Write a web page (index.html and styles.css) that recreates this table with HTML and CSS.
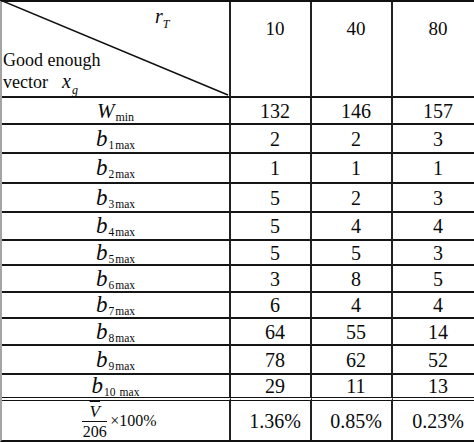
FILE: index.html
```html
<!DOCTYPE html>
<html>
<head>
<meta charset="utf-8">
<link rel="stylesheet" href="styles.css">
</head>
<body>
<div class="tbl">
  <div class="cell corner">
    <svg class="diag" viewBox="0 0 100 100" preserveAspectRatio="none"><line x1="0" y1="0" x2="100" y2="100"/></svg>
    <div class="rt"><i>r</i><span class="sub sub-t"><i>T</i></span></div>
    <div class="ge">Good enough<br>vector<span class="xg"><i>x</i><span class="sub sub-g"><i>g</i></span></span></div>
  </div>
  <div class="cell num head">10</div>
  <div class="cell num head">40</div>
  <div class="cell num head last">80</div>

  <div class="cell lab"><i class="w">W</i><span class="sub sub-m">min</span></div>
  <div class="cell num">132</div><div class="cell num">146</div><div class="cell num last">157</div>

  <div class="cell lab"><i class="b">b</i><span class="sub sub-b">1<span class="mx">max</span></span></div>
  <div class="cell num">2</div><div class="cell num">2</div><div class="cell num last">3</div>

  <div class="cell lab"><i class="b">b</i><span class="sub sub-b">2<span class="mx">max</span></span></div>
  <div class="cell num">1</div><div class="cell num">1</div><div class="cell num last">1</div>

  <div class="cell lab"><i class="b">b</i><span class="sub sub-b">3<span class="mx">max</span></span></div>
  <div class="cell num">5</div><div class="cell num">2</div><div class="cell num last">3</div>

  <div class="cell lab"><i class="b">b</i><span class="sub sub-b">4<span class="mx">max</span></span></div>
  <div class="cell num">5</div><div class="cell num">4</div><div class="cell num last">4</div>

  <div class="cell lab"><i class="b">b</i><span class="sub sub-b">5<span class="mx">max</span></span></div>
  <div class="cell num">5</div><div class="cell num">5</div><div class="cell num last">3</div>

  <div class="cell lab"><i class="b">b</i><span class="sub sub-b">6<span class="mx">max</span></span></div>
  <div class="cell num">3</div><div class="cell num">8</div><div class="cell num last">5</div>

  <div class="cell lab"><i class="b">b</i><span class="sub sub-b">7<span class="mx">max</span></span></div>
  <div class="cell num">6</div><div class="cell num">4</div><div class="cell num last">4</div>

  <div class="cell lab"><i class="b">b</i><span class="sub sub-b">8<span class="mx">max</span></span></div>
  <div class="cell num">64</div><div class="cell num">55</div><div class="cell num last">14</div>

  <div class="cell lab"><i class="b">b</i><span class="sub sub-b">9<span class="mx">max</span></span></div>
  <div class="cell num">78</div><div class="cell num">62</div><div class="cell num last">52</div>

  <div class="cell lab nob"><i class="b">b</i><span class="sub sub-b">10<span class="mx wide">max</span></span></div>
  <div class="cell num nob">29</div><div class="cell num nob">11</div><div class="cell num nob last">13</div>

  <div class="cell lab fin">
    <span class="frac"><span class="numer"><i class="vbar">V</i></span><span class="denom">206</span></span><span class="pct">×100%</span>
  </div>
  <div class="cell num fin">1.36%</div><div class="cell num fin">0.85%</div><div class="cell num fin last">0.23%</div>
</div>
</body>
</html>
```

FILE: styles.css
```css
html, body {
  margin: 0;
  padding: 0;
  background: #fff;
  overflow: hidden;
}
body {
  width: 474px;
  height: 442px;
  font-family: "Liberation Serif", "Times New Roman", serif;
  color: #0a0a0a;
}
.tbl {
  display: grid;
  grid-template-columns: 229px 81px 81px 81px;
  grid-template-rows: 96px 27px 29px 30px 29px 28px 25px 27px 26px 27px 29px 22px 43px;
  border-top: 2px solid #111;
  border-bottom: 2px solid #111;
  border-left: 2px solid #a4a4a4;
  width: 474px;
  box-sizing: border-box;
}
.cell {
  box-sizing: border-box;
  border-right: 2px solid #222;
  border-bottom: 2px solid #151515;
  background: #fff;
  position: relative;
}
.cell.last {
  border-right: none;
}
.cell.nob {
  border-bottom: none;
}
.cell.fin {
  border-bottom: none;
  border-top: 4px double #111;
}
.num {
  display: flex;
  align-items: center;
  justify-content: center;
  padding-left: 9px;
  font-size: 20px;
  line-height: 20px;
}
.num.head {
  align-items: flex-start;
  padding-top: 17px;
  font-size: 19px;
}
.lab {
  display: flex;
  align-items: center;
  justify-content: center;
  line-height: 20px;
}
.diag {
  position: absolute;
  left: -2px;
  top: -2px;
  width: calc(100% + 1px);
  height: calc(100% + 1px);
  overflow: visible;
}
.diag line {
  stroke: #111;
  stroke-width: 1.6px;
  vector-effect: non-scaling-stroke;
}
.rt {
  position: relative;
  padding-top: 4px;
  padding-left: 153px;
  font-size: 20px;
  line-height: 20px;
}
.ge {
  position: relative;
  margin-top: 21px;
  padding-left: 1px;
  font-size: 18px;
  line-height: 21px;
}
.xg {
  margin-left: 14px;
  font-size: 20px;
}
.sub {
  font-style: normal;
  position: relative;
}
.sub-t {
  font-size: 12px;
  top: 5px;
}
.sub-g {
  font-size: 12px;
  top: 6px;
  margin-left: 1px;
}
.w {
  font-size: 21px;
}
.sub-m {
  font-size: 12px;
  top: 6px;
  margin-left: 1px;
}
.b {
  font-size: 23px;
}
.sub-b {
  font-size: 11.5px;
  top: 6px;
  margin-left: 1px;
}
.mx {
  margin-left: 1px;
}
.mx.wide {
  margin-left: 4px;
}
.frac {
  display: inline-flex;
  flex-direction: column;
  align-items: center;
  margin-left: 8px;
  margin-top: 1px;
}
.numer {
  display: block;
  width: 25px;
  text-align: center;
  border-bottom: 1px solid #111;
  font-size: 17px;
  line-height: 19px;
}
.vbar {
  text-decoration: overline;
}
.denom {
  display: block;
  font-size: 16px;
  line-height: 17px;
  padding-top: 1px;
}
.pct {
  font-size: 16px;
  margin-left: 3px;
  margin-top: 1px;
}
```
